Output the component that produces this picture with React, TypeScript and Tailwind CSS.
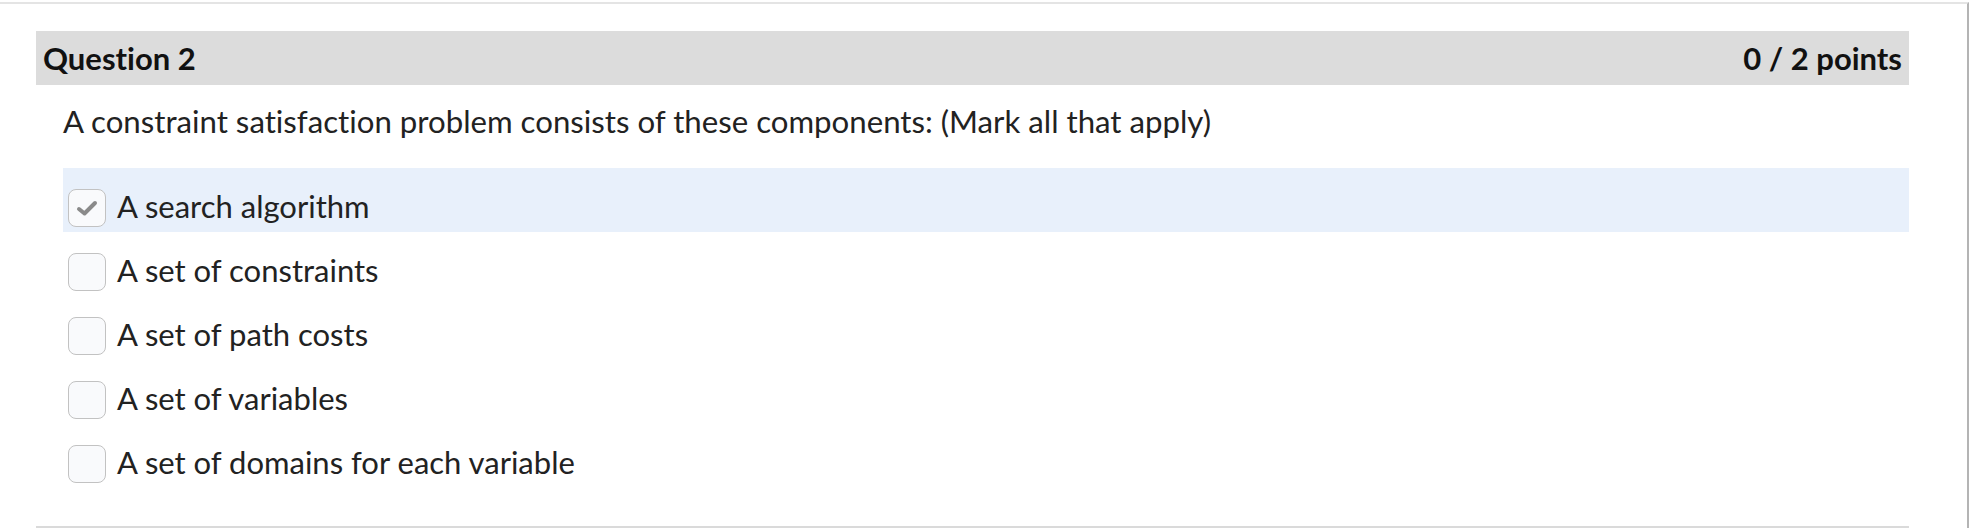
const OPTIONS = [
  { label: 'A search algorithm', checked: true },
  { label: 'A set of constraints', checked: false },
  { label: 'A set of path costs', checked: false },
  { label: 'A set of variables', checked: false },
  { label: 'A set of domains for each variable', checked: false },
];

function Checkbox({ checked }: { checked: boolean }) {
  return (
    <div className="w-[38px] h-[38px] shrink-0 rounded-[8px] border border-[#c2c2c2] bg-[#f9fafc] flex items-center justify-center">
      {checked && (
        <svg width="24" height="18" viewBox="0 0 24 18" fill="none">
          <path d="M4 10 L9.5 14.5 L20 4" stroke="#8a8a8a" strokeWidth="4" strokeLinecap="round" strokeLinejoin="round" />
        </svg>
      )}
    </div>
  );
}

export default function App() {
  return (
    <div
      className="w-[1970px] h-[528px] bg-white overflow-hidden [font-variant-ligatures:none]"
      style={{ fontFamily: 'Lato, "Open Sans", sans-serif' }}
    >
      <div className="mt-[2px] h-full border-t-2 border-t-[#e4e4e4] border-r-2 border-r-[#b4b4b4] mr-[1px]">
        <div className="ml-[36px] mr-[58px] pt-[27px] border-b-2 border-[#dadada] pb-[38px]">
          {/* Header */}
          <div className="h-[54px] bg-[#dcdcdc] flex items-center justify-between px-[7px] text-[31px] font-bold text-[#111]">
            <span>Question 2</span>
            <span>0 / 2 points</span>
          </div>

          <div className="ml-[27px]">
            <p className="mt-[14px] text-[31.2px] leading-[45px] text-[#222]">
              A constraint satisfaction problem consists of these components: (Mark all that apply)
            </p>

            <div className="mt-[24px]">
              {OPTIONS.map((o) => (
                <div
                  key={o.label}
                  className={`h-[64px] pt-[21px] pl-[5px] flex items-start gap-[11px] ${o.checked ? 'bg-[#e8f0fb]' : ''}`}
                >
                  <Checkbox checked={o.checked} />
                  <span className="mt-[2px] text-[31px] leading-[31px] text-[#222]">{o.label}</span>
                </div>
              ))}
            </div>
          </div>
        </div>
      </div>
    </div>
  );
}
